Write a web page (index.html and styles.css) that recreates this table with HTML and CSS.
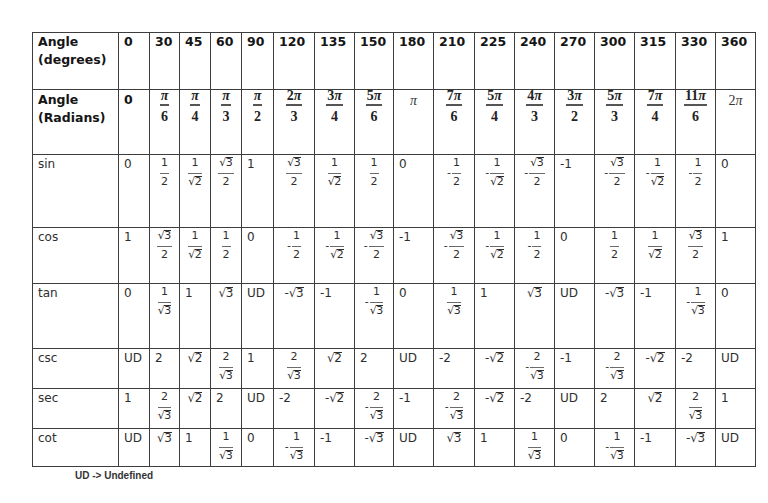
FILE: index.html
```html
<!DOCTYPE html>
<html lang="en">
<head>
<meta charset="utf-8">
<title>Trigonometric values table</title>
<link rel="stylesheet" href="styles.css">
</head>
<body>
<div class="page">
<table class="trig">
<colgroup>
<col class="cw86"><col class="cw31"><col class="cw30"><col class="cw31"><col class="cw31"><col class="cw32">
<col class="cw41"><col class="cw40"><col class="cw39"><col class="cw40"><col class="cw41"><col class="cw40">
<col class="cw40"><col class="cw40"><col class="cw40"><col class="cw41"><col class="cw40"><col class="cw40">
</colgroup>
<tr class="r-deg">
<th>Angle<br>(degrees)</th><th>0</th><th>30</th><th>45</th><th>60</th><th>90</th><th>120</th><th>135</th><th>150</th><th>180</th><th>210</th><th>225</th><th>240</th><th>270</th><th>300</th><th>315</th><th>330</th><th>360</th>
</tr>
<tr class="r-rad">
<th>Angle<br>(Radians)</th>
<th>0</th>
<th class="c"><span class="rf"><span class="n"><i>π</i></span><span class="d">6</span></span></th>
<th class="c"><span class="rf"><span class="n"><i>π</i></span><span class="d">4</span></span></th>
<th class="c"><span class="rf"><span class="n"><i>π</i></span><span class="d">3</span></span></th>
<th class="c"><span class="rf"><span class="n"><i>π</i></span><span class="d">2</span></span></th>
<th class="c"><span class="rf"><span class="n">2<i>π</i></span><span class="d">3</span></span></th>
<th class="c"><span class="rf"><span class="n">3<i>π</i></span><span class="d">4</span></span></th>
<th class="c"><span class="rf"><span class="n">5<i>π</i></span><span class="d">6</span></span></th>
<th class="c"><span class="rp"><i>π</i></span></th>
<th class="c"><span class="rf"><span class="n">7<i>π</i></span><span class="d">6</span></span></th>
<th class="c"><span class="rf"><span class="n">5<i>π</i></span><span class="d">4</span></span></th>
<th class="c"><span class="rf"><span class="n">4<i>π</i></span><span class="d">3</span></span></th>
<th class="c"><span class="rf"><span class="n">3<i>π</i></span><span class="d">2</span></span></th>
<th class="c"><span class="rf"><span class="n">5<i>π</i></span><span class="d">3</span></span></th>
<th class="c"><span class="rf"><span class="n">7<i>π</i></span><span class="d">4</span></span></th>
<th class="c"><span class="rf"><span class="n">11<i>π</i></span><span class="d">6</span></span></th>
<th class="c"><span class="rp">2<i>π</i></span></th>
</tr>
<tr class="r-sin">
<td>sin</td>
<td>0</td>
<td class="c"><span class="fr"><span class="n">1</span><span class="d">2</span></span></td>
<td class="c"><span class="fr"><span class="n">1</span><span class="d"><span class="sq">√<span class="rd">2</span></span></span></span></td>
<td class="c"><span class="fr"><span class="n"><span class="sq">√<span class="rd">3</span></span></span><span class="d">2</span></span></td>
<td>1</td>
<td class="c"><span class="fr"><span class="n"><span class="sq">√<span class="rd">3</span></span></span><span class="d">2</span></span></td>
<td class="c"><span class="fr"><span class="n">1</span><span class="d"><span class="sq">√<span class="rd">2</span></span></span></span></td>
<td class="c"><span class="fr"><span class="n">1</span><span class="d">2</span></span></td>
<td>0</td>
<td class="c"><span class="ng"><span class="mi">-</span><span class="fr"><span class="n">1</span><span class="d">2</span></span></span></td>
<td class="c"><span class="ng"><span class="mi">-</span><span class="fr"><span class="n">1</span><span class="d"><span class="sq">√<span class="rd">2</span></span></span></span></span></td>
<td class="c"><span class="ng"><span class="mi">-</span><span class="fr"><span class="n"><span class="sq">√<span class="rd">3</span></span></span><span class="d">2</span></span></span></td>
<td>-1</td>
<td class="c"><span class="ng"><span class="mi">-</span><span class="fr"><span class="n"><span class="sq">√<span class="rd">3</span></span></span><span class="d">2</span></span></span></td>
<td class="c"><span class="ng"><span class="mi">-</span><span class="fr"><span class="n">1</span><span class="d"><span class="sq">√<span class="rd">2</span></span></span></span></span></td>
<td class="c"><span class="ng"><span class="mi">-</span><span class="fr"><span class="n">1</span><span class="d">2</span></span></span></td>
<td>0</td>
</tr>
<tr class="r-cos">
<td>cos</td>
<td>1</td>
<td class="c"><span class="fr"><span class="n"><span class="sq">√<span class="rd">3</span></span></span><span class="d">2</span></span></td>
<td class="c"><span class="fr"><span class="n">1</span><span class="d"><span class="sq">√<span class="rd">2</span></span></span></span></td>
<td class="c"><span class="fr"><span class="n">1</span><span class="d">2</span></span></td>
<td>0</td>
<td class="c"><span class="ng"><span class="mi">-</span><span class="fr"><span class="n">1</span><span class="d">2</span></span></span></td>
<td class="c"><span class="ng"><span class="mi">-</span><span class="fr"><span class="n">1</span><span class="d"><span class="sq">√<span class="rd">2</span></span></span></span></span></td>
<td class="c"><span class="ng"><span class="mi">-</span><span class="fr"><span class="n"><span class="sq">√<span class="rd">3</span></span></span><span class="d">2</span></span></span></td>
<td>-1</td>
<td class="c"><span class="ng"><span class="mi">-</span><span class="fr"><span class="n"><span class="sq">√<span class="rd">3</span></span></span><span class="d">2</span></span></span></td>
<td class="c"><span class="ng"><span class="mi">-</span><span class="fr"><span class="n">1</span><span class="d"><span class="sq">√<span class="rd">2</span></span></span></span></span></td>
<td class="c"><span class="ng"><span class="mi">-</span><span class="fr"><span class="n">1</span><span class="d">2</span></span></span></td>
<td>0</td>
<td class="c"><span class="fr"><span class="n">1</span><span class="d">2</span></span></td>
<td class="c"><span class="fr"><span class="n">1</span><span class="d"><span class="sq">√<span class="rd">2</span></span></span></span></td>
<td class="c"><span class="fr"><span class="n"><span class="sq">√<span class="rd">3</span></span></span><span class="d">2</span></span></td>
<td>1</td>
</tr>
<tr class="r-tan">
<td>tan</td>
<td>0</td>
<td class="c"><span class="fr"><span class="n">1</span><span class="d"><span class="sq">√<span class="rd">3</span></span></span></span></td>
<td>1</td>
<td class="c"><span class="sq">√<span class="rd">3</span></span></td>
<td>UD</td>
<td class="c">-<span class="sq">√<span class="rd">3</span></span></td>
<td>-1</td>
<td class="c"><span class="ng"><span class="mi">-</span><span class="fr"><span class="n">1</span><span class="d"><span class="sq">√<span class="rd">3</span></span></span></span></span></td>
<td>0</td>
<td class="c"><span class="fr"><span class="n">1</span><span class="d"><span class="sq">√<span class="rd">3</span></span></span></span></td>
<td>1</td>
<td class="c"><span class="sq">√<span class="rd">3</span></span></td>
<td>UD</td>
<td class="c">-<span class="sq">√<span class="rd">3</span></span></td>
<td>-1</td>
<td class="c"><span class="ng"><span class="mi">-</span><span class="fr"><span class="n">1</span><span class="d"><span class="sq">√<span class="rd">3</span></span></span></span></span></td>
<td>0</td>
</tr>
<tr class="r-csc">
<td>csc</td>
<td>UD</td>
<td>2</td>
<td class="c"><span class="sq">√<span class="rd">2</span></span></td>
<td class="c"><span class="fr"><span class="n">2</span><span class="d"><span class="sq">√<span class="rd">3</span></span></span></span></td>
<td>1</td>
<td class="c"><span class="fr"><span class="n">2</span><span class="d"><span class="sq">√<span class="rd">3</span></span></span></span></td>
<td class="c"><span class="sq">√<span class="rd">2</span></span></td>
<td>2</td>
<td>UD</td>
<td>-2</td>
<td class="c">-<span class="sq">√<span class="rd">2</span></span></td>
<td class="c"><span class="ng"><span class="mi">-</span><span class="fr"><span class="n">2</span><span class="d"><span class="sq">√<span class="rd">3</span></span></span></span></span></td>
<td>-1</td>
<td class="c"><span class="ng"><span class="mi">-</span><span class="fr"><span class="n">2</span><span class="d"><span class="sq">√<span class="rd">3</span></span></span></span></span></td>
<td class="c">-<span class="sq">√<span class="rd">2</span></span></td>
<td>-2</td>
<td>UD</td>
</tr>
<tr class="r-sec">
<td>sec</td>
<td>1</td>
<td class="c"><span class="fr"><span class="n">2</span><span class="d"><span class="sq">√<span class="rd">3</span></span></span></span></td>
<td class="c"><span class="sq">√<span class="rd">2</span></span></td>
<td>2</td>
<td>UD</td>
<td>-2</td>
<td class="c">-<span class="sq">√<span class="rd">2</span></span></td>
<td class="c"><span class="ng"><span class="mi">-</span><span class="fr"><span class="n">2</span><span class="d"><span class="sq">√<span class="rd">3</span></span></span></span></span></td>
<td>-1</td>
<td class="c"><span class="ng"><span class="mi">-</span><span class="fr"><span class="n">2</span><span class="d"><span class="sq">√<span class="rd">3</span></span></span></span></span></td>
<td class="c">-<span class="sq">√<span class="rd">2</span></span></td>
<td>-2</td>
<td>UD</td>
<td>2</td>
<td class="c"><span class="sq">√<span class="rd">2</span></span></td>
<td class="c"><span class="fr"><span class="n">2</span><span class="d"><span class="sq">√<span class="rd">3</span></span></span></span></td>
<td>1</td>
</tr>
<tr class="r-cot">
<td>cot</td>
<td>UD</td>
<td class="c"><span class="sq">√<span class="rd">3</span></span></td>
<td>1</td>
<td class="c"><span class="fr"><span class="n">1</span><span class="d"><span class="sq">√<span class="rd">3</span></span></span></span></td>
<td>0</td>
<td class="c"><span class="ng"><span class="mi">-</span><span class="fr"><span class="n">1</span><span class="d"><span class="sq">√<span class="rd">3</span></span></span></span></span></td>
<td>-1</td>
<td class="c">-<span class="sq">√<span class="rd">3</span></span></td>
<td>UD</td>
<td class="c"><span class="sq">√<span class="rd">3</span></span></td>
<td>1</td>
<td class="c"><span class="fr"><span class="n">1</span><span class="d"><span class="sq">√<span class="rd">3</span></span></span></span></td>
<td>0</td>
<td class="c"><span class="ng"><span class="mi">-</span><span class="fr"><span class="n">1</span><span class="d"><span class="sq">√<span class="rd">3</span></span></span></span></span></td>
<td>-1</td>
<td class="c">-<span class="sq">√<span class="rd">3</span></span></td>
<td>UD</td>
</tr>
</table>
<p class="note">UD -&gt; Undefined</p>
</div>
</body>
</html>
```

FILE: styles.css
```css
html, body {
  margin: 0;
  background: #ffffff;
}

body {
  font-family: "DejaVu Sans", Verdana, sans-serif;
  color: #2e2e2e;
}

.page {
  padding: 32px 0 0 32px;
}

.trig {
  border-collapse: collapse;
  table-layout: fixed;
  width: 724px;
}

.cw86 { width: 86px; }
.cw30 { width: 30px; }
.cw31 { width: 31px; }
.cw32 { width: 32px; }
.cw39 { width: 39px; }
.cw40 { width: 40px; }
.cw41 { width: 41px; }

.trig th,
.trig td {
  border: 1px solid #3d3d3d;
  vertical-align: top;
  text-align: left;
  padding: 2px 0 0 5px;
  font-size: 12px;
  line-height: 14px;
  white-space: nowrap;
  overflow: visible;
}

.trig th {
  font-weight: bold;
  font-size: 12.5px;
  line-height: 18px;
  padding-top: 0;
  color: #151515;
}

.trig .r-rad th {
  padding-top: 1px;
}

.trig .c {
  text-align: center;
  padding-left: 0;
}

.r-deg { height: 57px; }
.r-rad { height: 65px; }
.r-sin { height: 73px; }
.r-cos { height: 56px; }
.r-tan { height: 65px; }
.r-csc { height: 40px; }
.r-sec { height: 40px; }
.r-cot { height: 38px; }

/* radian fractions (bold serif) */
.rf {
  display: inline-flex;
  flex-direction: column;
  vertical-align: top;
  margin-top: -1px;
  font-family: "Liberation Serif", "DejaVu Serif", serif;
  font-weight: bold;
  font-size: 14px;
  color: #222;
}

.rf .n {
  line-height: 11px;
  padding: 0 1px 3px;
}

.rf .d {
  line-height: 15px;
  border-top: 2px solid #555;
  padding-top: 3px;
}

.rp {
  display: inline-block;
  padding-top: 3px;
  font-family: "Liberation Serif", "DejaVu Serif", serif;
  font-size: 14px;
  line-height: 14px;
  font-weight: normal;
  color: #333;
}

/* value fractions */
.fr {
  display: inline-flex;
  flex-direction: column;
  vertical-align: top;
  font-size: 11px;
  line-height: 12px;
  text-align: center;
}

.fr .n {
  padding: 0 1px 4px;
}

.fr .d {
  border-top: 1px solid #6a6a6a;
  padding-top: 2px;
}

.ng {
  display: inline-flex;
  align-items: flex-start;
  vertical-align: top;
}

.mi {
  font-size: 11px;
  line-height: 12px;
  margin-top: 10px;
  margin-right: 1px;
}

.sq {
  white-space: nowrap;
}

.rd {
  display: inline-block;
  border-top: 1px solid currentColor;
  line-height: 0.85em;
  margin-left: -0.5px;
}

.note {
  margin: 3px 0 0 43px;
  font-family: "Liberation Sans", Arial, sans-serif;
  font-weight: bold;
  font-size: 10px;
  line-height: 12px;
  color: #333;
}
```
